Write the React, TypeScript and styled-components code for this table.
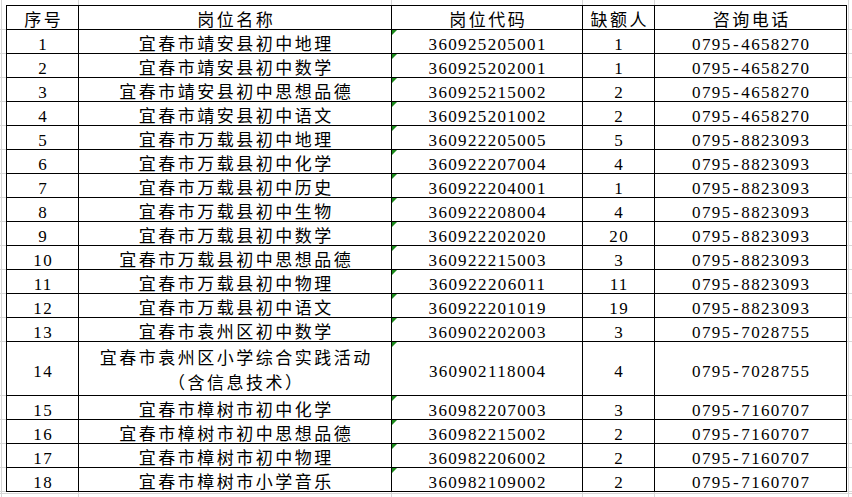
import React from 'react'
import styled, { createGlobalStyle, css } from 'styled-components'

const GlobalStyle = createGlobalStyle`
  html, body {
    margin: 0;
    padding: 0;
    background: #fff;
  }
  body {
    width: 852px;
    height: 497px;
    overflow: hidden;
  }
`

type Post = {
  no: number
  name: string[]
  code: string
  count: number
  phone: string
}

const POSTS: Post[] = [
  { no: 1, name: ['宜春市靖安县初中地理'], code: '360925205001', count: 1, phone: '0795-4658270' },
  { no: 2, name: ['宜春市靖安县初中数学'], code: '360925202001', count: 1, phone: '0795-4658270' },
  { no: 3, name: ['宜春市靖安县初中思想品德'], code: '360925215002', count: 2, phone: '0795-4658270' },
  { no: 4, name: ['宜春市靖安县初中语文'], code: '360925201002', count: 2, phone: '0795-4658270' },
  { no: 5, name: ['宜春市万载县初中地理'], code: '360922205005', count: 5, phone: '0795-8823093' },
  { no: 6, name: ['宜春市万载县初中化学'], code: '360922207004', count: 4, phone: '0795-8823093' },
  { no: 7, name: ['宜春市万载县初中历史'], code: '360922204001', count: 1, phone: '0795-8823093' },
  { no: 8, name: ['宜春市万载县初中生物'], code: '360922208004', count: 4, phone: '0795-8823093' },
  { no: 9, name: ['宜春市万载县初中数学'], code: '360922202020', count: 20, phone: '0795-8823093' },
  { no: 10, name: ['宜春市万载县初中思想品德'], code: '360922215003', count: 3, phone: '0795-8823093' },
  { no: 11, name: ['宜春市万载县初中物理'], code: '360922206011', count: 11, phone: '0795-8823093' },
  { no: 12, name: ['宜春市万载县初中语文'], code: '360922201019', count: 19, phone: '0795-8823093' },
  { no: 13, name: ['宜春市袁州区初中数学'], code: '360902202003', count: 3, phone: '0795-7028755' },
  { no: 14, name: ['宜春市袁州区小学综合实践活动', '（含信息技术）'], code: '360902118004', count: 4, phone: '0795-7028755' },
  { no: 15, name: ['宜春市樟树市初中化学'], code: '360982207003', count: 3, phone: '0795-7160707' },
  { no: 16, name: ['宜春市樟树市初中思想品德'], code: '360982215002', count: 2, phone: '0795-7160707' },
  { no: 17, name: ['宜春市樟树市初中物理'], code: '360982206002', count: 2, phone: '0795-7160707' },
  { no: 18, name: ['宜春市樟树市小学音乐'], code: '360982109002', count: 2, phone: '0795-7160707' },
]

const HEADERS = ['序号', '岗位名称', '岗位代码', '缺额人', '咨询电话']
const COL_WIDTHS = [72, 313, 191, 72, 192]

// faint spreadsheet gridlines around the bordered table
const GRID = '#d6d6d6'
const COL_LINES = [1, 78, 391, 582, 654, 848]
const ROW_LINES = (() => {
  let y = 29
  const ys = [y]
  POSTS.forEach(p => {
    y += p.name.length > 1 ? 54 : 24
    ys.push(y)
  })
  ys.push(y + 2)
  return ys
})()

const line = (x: string, y: string, w: string, h: string) =>
  `linear-gradient(${GRID}, ${GRID}) ${x} ${y} / ${w} ${h} no-repeat`

const gridBackground = [
  ...COL_LINES.map(x => line(`${x}px`, '0', '1px', '100%')),
  ...ROW_LINES.map(y => line('0', `${y}px`, '100%', '1px')),
].join(', ')

const Sheet = styled.div`
  box-sizing: border-box;
  width: 852px;
  height: 497px;
  padding: 5px 0 0 6px;
  background: ${gridBackground};
  background-color: #fff;
`

const Table = styled.table`
  border-collapse: collapse;
  table-layout: fixed;
  width: 841px;
  background: #fff;
  color: #000;
`

const Row = styled.tr<{ $tall?: boolean }>`
  height: ${p => (p.$tall ? 54 : 24)}px;
`

const cjk = css`
  font-family: "Noto Sans CJK SC", "Liberation Sans", sans-serif;
  font-size: 17px;
  letter-spacing: 2.5px;
  padding-left: 2.5px;
`

const digits = css`
  font-family: "Liberation Serif", serif;
  font-size: 17px;
  letter-spacing: 1.35px;
  padding-left: 1.35px;
`

const HeadCell = styled.th`
  ${cjk};
  border: 1px solid #000;
  padding-top: 3.5px;
  padding-bottom: 0;
  padding-right: 0;
  font-weight: 400;
  line-height: 18px;
  text-align: center;
  vertical-align: top;
  white-space: nowrap;
`

const Cell = styled.td<{ $text?: boolean; $tall?: boolean; $flag?: boolean }>`
  ${p => (p.$text ? cjk : digits)};
  border: 1px solid #000;
  padding-bottom: 0;
  padding-right: 0;
  text-align: center;
  white-space: nowrap;

  ${p =>
    p.$text
      ? css`
          vertical-align: top;
          padding-top: ${p.$tall ? 2 : 3.5}px;
          line-height: ${p.$tall ? 25 : 18}px;
        `
      : css`
          vertical-align: middle;
          padding-top: 6px;
          line-height: 16px;
        `}

  ${p =>
    p.$flag &&
    css`
      position: relative;
      &::before {
        content: '';
        position: absolute;
        top: 0;
        left: 0;
        border-top: 5px solid #1a8a1a;
        border-right: 5px solid transparent;
      }
    `}
`

const Dash = styled.span`
  padding: 0 1.4px;
`

const Phone = ({ value }: { value: string }) => {
  const [area, num] = value.split('-')
  return (
    <>
      {area}
      <Dash>-</Dash>
      {num}
    </>
  )
}

const App: React.FC = () => {
  return (
    <>
      <GlobalStyle />
      <Sheet>
        <Table>
          <colgroup>
            {COL_WIDTHS.map((w, i) => (
              <col key={i} style={{ width: w }} />
            ))}
          </colgroup>
          <thead>
            <Row>
              {HEADERS.map(h => (
                <HeadCell key={h}>{h}</HeadCell>
              ))}
            </Row>
          </thead>
          <tbody>
            {POSTS.map(p => {
              const tall = p.name.length > 1
              return (
                <Row key={p.no} $tall={tall}>
                  <Cell>{p.no}</Cell>
                  <Cell $text $tall={tall}>
                    {p.name.map((part, i) => (
                      <React.Fragment key={i}>
                        {i > 0 && <br />}
                        {part}
                      </React.Fragment>
                    ))}
                  </Cell>
                  <Cell $flag>{p.code}</Cell>
                  <Cell>{p.count}</Cell>
                  <Cell>
                    <Phone value={p.phone} />
                  </Cell>
                </Row>
              )
            })}
          </tbody>
        </Table>
      </Sheet>
    </>
  )
}

export default App
